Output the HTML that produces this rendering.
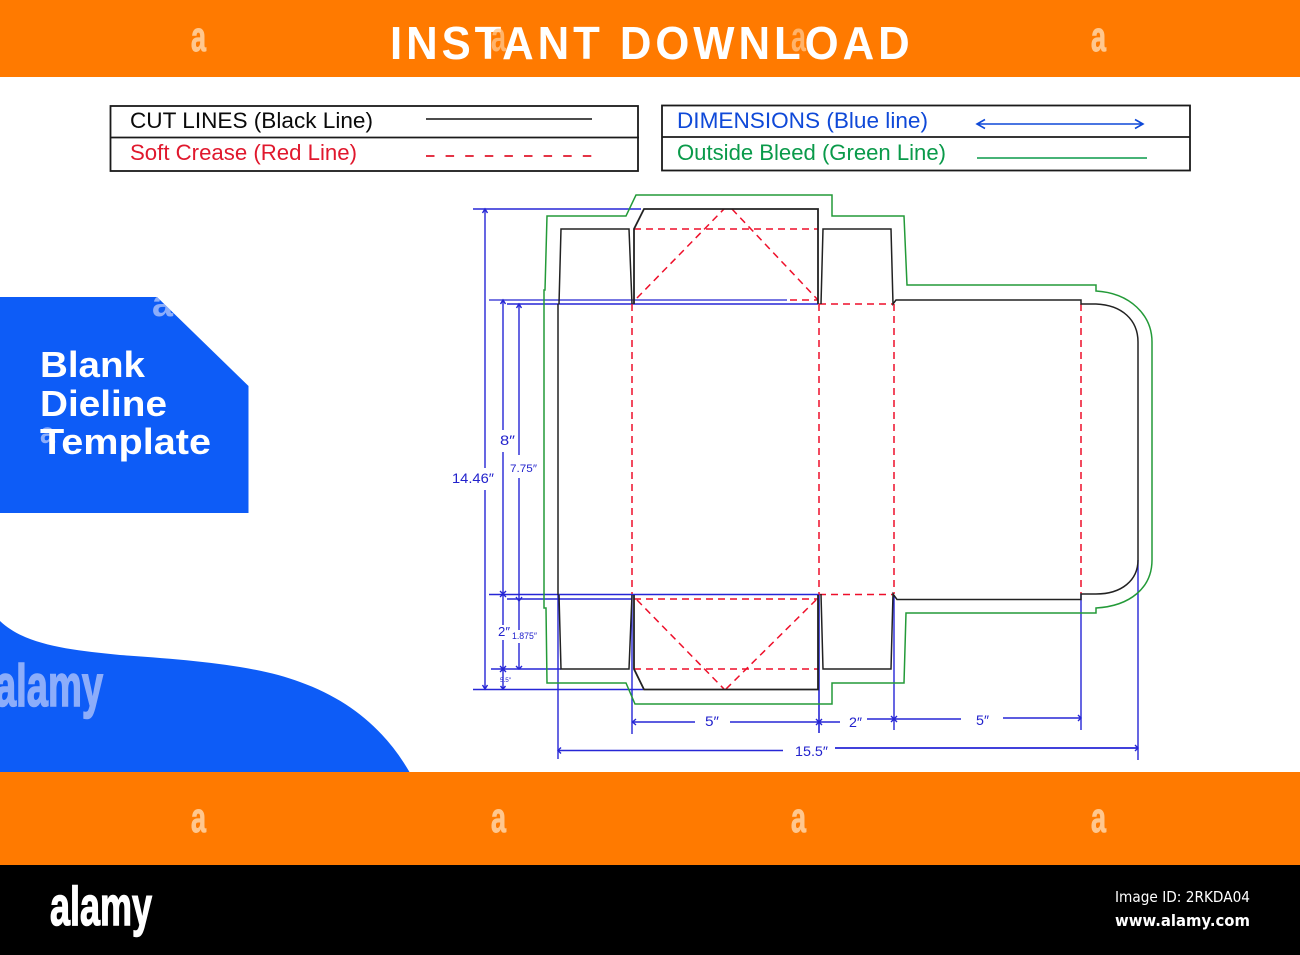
<!DOCTYPE html>
<html lang="en">
<head>
<meta charset="utf-8">
<title>Blank Dieline Template</title>
<style>
html,body{margin:0;padding:0;background:#fff;width:1300px;height:955px;overflow:hidden}
svg{display:block}
text{font-family:"Liberation Sans",sans-serif}
</style>
</head>
<body>
<svg width="1300" height="955" viewBox="0 0 1300 955" xmlns="http://www.w3.org/2000/svg">
<defs><clipPath id="panel"><polygon points="0,297 157,297 248.500,386 248.500,513 0,513"/></clipPath></defs>
<rect width="1300" height="955" fill="#fff"/>
<!-- bands -->
<rect x="0" y="0" width="1300" height="77" fill="#ff7a00"/>
<rect x="0" y="772" width="1300" height="93" fill="#ff7a00"/>
<rect x="0" y="865" width="1300" height="90" fill="#000"/>

<!-- header -->
<text transform="translate(390 59) scale(.95 1)" x="0" y="0" font-size="46" font-weight="700" fill="#fff" textLength="547" lengthAdjust="spacing">INSTANT DOWNLOAD</text>
<g font-size="42" font-weight="700" fill="#ffc78e" stroke="#ffc78e" stroke-width=".9">
<text x="191" y="51" textLength="15" lengthAdjust="spacingAndGlyphs">a</text>
<text x="1091" y="51" textLength="15" lengthAdjust="spacingAndGlyphs">a</text>
<text x="191" y="832" textLength="15" lengthAdjust="spacingAndGlyphs">a</text>
<text x="491" y="832" textLength="15" lengthAdjust="spacingAndGlyphs">a</text>
<text x="791" y="832" textLength="15" lengthAdjust="spacingAndGlyphs">a</text>
<text x="1091" y="832" textLength="15" lengthAdjust="spacingAndGlyphs">a</text>
</g>
<g font-size="42" font-weight="700" fill="#ffc78e" fill-opacity=".75">
<text x="491" y="51" textLength="15" lengthAdjust="spacingAndGlyphs">a</text>
<text x="791" y="51" textLength="15" lengthAdjust="spacingAndGlyphs">a</text>
</g>

<!-- legend boxes -->
<g fill="none" stroke="#1a1a1a" stroke-width="1.800">
<rect x="110.500" y="106" width="527.500" height="65"/>
<line x1="110" y1="137.500" x2="639" y2="137.500"/>
<rect x="662" y="105.500" width="528" height="65"/>
<line x1="662" y1="137" x2="1190" y2="137"/>
</g>
<g font-size="22">
<text x="130" y="128" fill="#0a0a0a" textLength="243" lengthAdjust="spacingAndGlyphs">CUT LINES (Black Line)</text>
<text x="130" y="160" fill="#e0182d" textLength="227" lengthAdjust="spacingAndGlyphs">Soft Crease (Red Line)</text>
<text x="677" y="128" fill="#0f49d8" textLength="251" lengthAdjust="spacingAndGlyphs">DIMENSIONS (Blue line)</text>
<text x="677" y="160" fill="#0a9a4a" textLength="269" lengthAdjust="spacingAndGlyphs">Outside Bleed (Green Line)</text>
</g>
<line x1="426" y1="119" x2="592" y2="119" stroke="#111" stroke-width="1.600"/>
<line x1="426" y1="156" x2="592" y2="156" stroke="#e0182d" stroke-width="1.700" stroke-dasharray="8.500 11.100"/>
<g fill="none" stroke="#0f49d8" stroke-width="1.600">
<path d="M977 124H1143M985 119.500L977 124L985 128.500M1135 119.500L1143 124L1135 128.500"/>
</g>
<line x1="977" y1="158" x2="1147" y2="158" stroke="#0a9a4a" stroke-width="1.600"/>

<!-- blue panel -->
<polygon points="0,297 157,297 248.500,386 248.500,513 0,513" fill="#0d5cf7"/>
<g clip-path="url(#panel)"><text x="152" y="316" font-size="38" font-weight="700" fill="#8cadfa" textLength="21" lengthAdjust="spacingAndGlyphs">a</text></g>
<text x="40" y="443" font-size="30" font-weight="700" fill="#8cadfa" textLength="15" lengthAdjust="spacingAndGlyphs">a</text>
<g font-size="36" font-weight="700" fill="#fff">
<text x="40" y="377" textLength="105" lengthAdjust="spacingAndGlyphs">Blank</text>
<text x="40" y="416" textLength="127" lengthAdjust="spacingAndGlyphs">Dieline</text>
<text x="40" y="454" textLength="171" lengthAdjust="spacingAndGlyphs">Template</text>
</g>

<!-- wave -->
<path d="M0 621C25 645 70 650 120 655C190 660 255 665 300 682C350 700 385 730 409.500 772H0Z" fill="#0d5cf7"/>
<text x="-5" y="706" font-size="59" font-weight="700" fill="#8cadfa" stroke="#8cadfa" stroke-width="1.600" textLength="108" lengthAdjust="spacingAndGlyphs">alamy</text>

<!-- blue dimension lines -->
<g fill="none" stroke="#2626d6" stroke-width="1.400">
<path d="M473 209H641M473 689.500H643"/>
<path d="M489 300H787" stroke="#4a4ad8"/>
<path d="M507 304H818"/>
<path d="M489 594.500H819" stroke-width="1.600"/>
<path d="M507 599H632"/>
<path d="M491 669H561"/>
<path d="M485 209V468M485 490V689"/>
<path d="M503 300V430M503 452V625M503 640V689"/>
<path d="M519 304V455M519 478V630M519 643V669"/>
<path d="M558 595V759"/>
<path d="M632 595V734"/>
<path d="M819 595V733" stroke-width="1.600"/>
<path d="M894 595V730"/>
<path d="M1081 594V730"/>
<path d="M1138 560V760"/>
<path d="M633 722H695M730 722H840"/>
<path d="M867 719H961M1003 718H1081"/>
<path d="M558 750.500H783"/>
<path d="M835 748H1138" stroke-width="1.800"/>
<!-- arrowheads -->
<path d="M482.500 213L485 209L487.500 213M482.500 685L485 689L487.500 685"/>
<path d="M500.500 304L503 300L505.500 304M516.500 308L519 304L521.500 308"/>
<path d="M500 591L506 597M506 591L500 597M516 597L519 601L522 597M500 666L506 672M506 666L500 672M516 666L519 669L522 666M500.500 686L503 689L505.500 686"/>
<path d="M636 719L632.500 722L636 725M816 719L822 725M822 719L816 725M891 716L897 722M897 716L891 722M1078 715L1081 718L1078 721M561 747.500L558 750.500L561 753.500M1135 745L1138 748L1135 751"/>
</g>

<!-- green bleed -->
<path d="M547 216H626L636 195H832V216H904L907 285H1096V291C1130 293 1152 315 1152 342V560C1152 588 1130 606 1096 608V613H906L904 683H832V704H635L626 683H547L546 608H544V290H545Z" fill="none" stroke="#239a38" stroke-width="1.500"/>

<!-- red creases -->
<g fill="none" stroke="#ee0f2a" stroke-width="1.500" stroke-dasharray="7 5">
<path d="M632 304V594"/>
<path d="M819 304V594"/>
<path d="M894 304V594"/>
<path d="M1081 304V594"/>
<path d="M819 304H894"/>
<path d="M819 594.500H894"/>
<path d="M790 300H818"/>
<path d="M634 229H818"/>
<path d="M634 669H818"/>
<path d="M634 599H818"/>
<path d="M637 298L724 209"/>
<path d="M732 209L818 300"/>
<path d="M637 600L724 689"/>
<path d="M726 689L816 600"/>
</g>

<!-- black cut lines -->
<g fill="none" stroke="#222" stroke-width="1.500">
<path d="M559 304L561 229H629L632 304"/>
<path d="M634 304V229L644 209H818V304" stroke-width="1.800"/>
<path d="M821 304L823 229H891L893 304L896 300H1081V304H1096C1122 305 1138 320 1138 342V560C1138 580 1122 594 1096 594H1081V599.500H897L893 594L891 669H823L821 594"/>
<path d="M558 304V595"/>
<path d="M559 595L561 669H629L632 595"/>
<path d="M634 595V669L644 689.500H818V595" stroke-width="1.800"/>
</g>

<!-- dimension labels -->
<g fill="#2222cc">
<text x="452" y="483" font-size="14" textLength="42" lengthAdjust="spacingAndGlyphs">14.46″</text>
<text x="500" y="445" font-size="14" textLength="15" lengthAdjust="spacingAndGlyphs">8″</text>
<text x="510" y="472" font-size="11" textLength="27" lengthAdjust="spacingAndGlyphs">7.75″</text>
<text x="498" y="636" font-size="13" textLength="12" lengthAdjust="spacingAndGlyphs">2″</text>
<text x="512" y="639" font-size="9" textLength="25" lengthAdjust="spacingAndGlyphs">1.875″</text>
<text x="500" y="682" font-size="6" textLength="11" lengthAdjust="spacingAndGlyphs">5.5″</text>
<text x="705" y="726" font-size="14" textLength="14" lengthAdjust="spacingAndGlyphs">5″</text>
<text x="849" y="727" font-size="14" textLength="13" lengthAdjust="spacingAndGlyphs">2″</text>
<text x="976" y="725" font-size="14" textLength="13" lengthAdjust="spacingAndGlyphs">5″</text>
<text x="795" y="756" font-size="14" textLength="33" lengthAdjust="spacingAndGlyphs">15.5″</text>
</g>

<!-- footer -->
<text x="50" y="925" font-size="55" font-weight="700" fill="#fff" stroke="#fff" stroke-width="1.400" textLength="102" lengthAdjust="spacingAndGlyphs">alamy</text>
<text x="1115" y="902" font-size="15" fill="#fff" textLength="135" lengthAdjust="spacingAndGlyphs" style="font-family:'DejaVu Sans',sans-serif">Image ID: 2RKDA04</text>
<text x="1115" y="926" font-size="16" font-weight="700" fill="#fff" textLength="135" lengthAdjust="spacingAndGlyphs" style="font-family:'DejaVu Sans',sans-serif">www.alamy.com</text>
</svg>
</body>
</html>
